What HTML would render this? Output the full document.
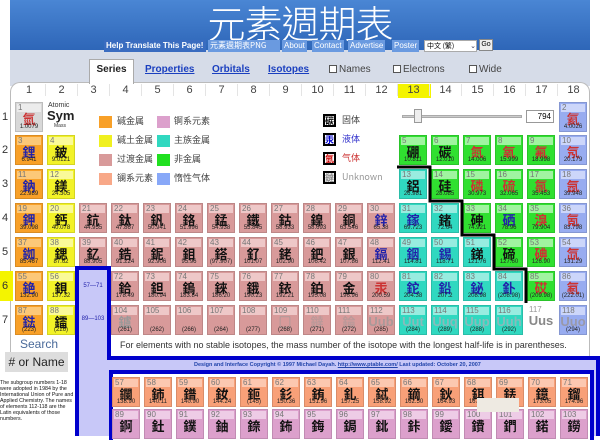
<!DOCTYPE html>
<html><head><meta charset="utf-8">
<style>
*{margin:0;padding:0;box-sizing:border-box}
body{width:600px;height:431px;overflow:hidden;background:#fff;position:relative;font-family:"Liberation Sans","Noto Sans CJK TC",sans-serif}
.a{position:absolute}
.c{position:absolute;width:28px;height:30px;border:1px solid rgba(0,0,0,.12);overflow:hidden}
.c .t{position:absolute;left:1px;top:1px;right:1px;height:8px;font-size:8px;line-height:8px;color:#777;padding-left:1px}
.c .s{position:absolute;left:0;right:0;top:9px;text-align:center;font-size:13px;line-height:14px;font-weight:bold;font-family:"Noto Sans CJK TC","WenQuanYi Zen Hei",sans-serif}
.c .m{position:absolute;left:0;right:0;bottom:1px;text-align:center;font-size:6px;line-height:6px;color:#222}
.g{position:absolute;top:84px;width:32px;text-align:center;font-size:11px;color:#444}
.nav{position:absolute;top:40px;height:12px;font-size:8px;line-height:12px;color:#fff;padding:0 2px}
.lg{position:absolute;width:13px;height:12px}
.lt{position:absolute;font-size:9px;color:#444;font-family:"Noto Sans CJK TC",sans-serif}
.sb{position:absolute;width:13px;height:13px;border:2px solid #000;font-size:9px;line-height:9px;text-align:center;font-weight:bold;background:#fff;font-family:"Noto Sans CJK TC",sans-serif}
.tab{position:absolute;top:64px;font-size:10px;font-weight:bold;color:#1a3fbf;text-decoration:underline}
.cb{position:absolute;top:64px;font-size:10px;color:#444}
.cb i{display:inline-block;width:8px;height:8px;border:1px solid #555;margin-right:2px;vertical-align:-1px;background:#fff}
</style></head><body>
<div class="a" style="left:10px;top:0;width:580px;height:50px;background:linear-gradient(#4a86d4,#2e66b8)"></div>
<div class="a" style="left:10px;top:50px;width:580px;height:36px;background:#d6dce8"></div>
<div class="a" style="left:200px;top:-6px;width:200px;text-align:center;font-size:38px;color:#fff;font-family:'Noto Sans CJK TC',sans-serif;font-weight:300;letter-spacing:-1px">元素週期表</div>
<div class="nav" style="left:104px;width:102px;background:#3a6cc0;font-weight:bold">Help Translate This Page!</div>
<div class="nav" style="left:208px;width:72px;background:#6a9ae0;font-family:'Noto Sans CJK TC',sans-serif">元素週期表PNG</div>
<div class="nav" style="left:282px;background:#6a9ae0">About</div>
<div class="nav" style="left:312px;background:#6a9ae0">Contact</div>
<div class="nav" style="left:348px;background:#6a9ae0">Advertise</div>
<div class="nav" style="left:392px;background:#6a9ae0">Poster</div>
<div class="a" style="left:424px;top:40px;width:53px;height:12px;background:#fff;border:1px solid #aaa;font-size:7px;line-height:10px;padding-left:2px;font-family:'Noto Sans CJK TC',sans-serif">中文 (繁) <span style="float:right;color:#335">⌄</span></div>
<div class="a" style="left:479px;top:39px;width:14px;height:12px;background:#eee;border:1px solid #888;font-size:7px;line-height:10px;text-align:center">Go</div>
<div class="a" style="left:10px;top:82px;width:580px;height:280px;background:#fff;border:1px solid #bbb;border-bottom:none;border-radius:10px 10px 0 0"></div>
<div class="a" style="left:89px;top:59px;width:45px;height:25px;background:#fff;border:1px solid #aaa;border-bottom:none;font-size:10px;font-weight:bold;text-align:center;line-height:20px;color:#222">Series</div>
<div class="tab" style="left:145px">Properties</div>
<div class="tab" style="left:212px">Orbitals</div>
<div class="tab" style="left:268px">Isotopes</div>
<div class="cb" style="left:329px"><i></i>Names</div>
<div class="cb" style="left:393px"><i></i>Electrons</div>
<div class="cb" style="left:469px"><i></i>Wide</div>
<div class="a" style="left:398px;top:84px;width:33px;height:14px;background:#f4f400"></div>
<div id="grp"></div>
<div class="lg" style="left:99px;top:116px;background:#f8a028"></div><div class="lt" style="left:117px;top:114px">碱金属</div>
<div class="lg" style="left:99px;top:135px;background:#f0f020"></div><div class="lt" style="left:117px;top:133px">碱土金属</div>
<div class="lg" style="left:99px;top:154px;background:#d89a9a"></div><div class="lt" style="left:117px;top:152px">过渡金属</div>
<div class="lg" style="left:99px;top:173px;background:#f8a888"></div><div class="lt" style="left:117px;top:171px">镧系元素</div>
<div class="lg" style="left:157px;top:116px;background:#dca0cc"></div><div class="lt" style="left:174px;top:114px">锕系元素</div>
<div class="lg" style="left:157px;top:135px;background:#30d8c0"></div><div class="lt" style="left:174px;top:133px">主族金属</div>
<div class="lg" style="left:157px;top:154px;background:#20e020"></div><div class="lt" style="left:174px;top:152px">非金属</div>
<div class="lg" style="left:157px;top:173px;background:#88a8f8"></div><div class="lt" style="left:174px;top:171px">惰性气体</div>
<div class="sb" style="left:323px;top:114px">碳</div><div class="lt" style="left:342px;top:113px">固体</div>
<div class="sb" style="left:323px;top:133px;color:#00c">汞</div><div class="lt" style="left:342px;top:132px;color:#33c">液体</div>
<div class="sb" style="left:323px;top:152px;color:#c00">氫</div><div class="lt" style="left:342px;top:151px;color:#c33">气体</div>
<div class="sb" style="left:323px;top:171px;color:#888">鐽</div><div class="lt" style="left:342px;top:170px;color:#999">Unknown</div>
<div class="a" style="left:402px;top:115px;width:120px;height:3px;background:#ccc;border:1px solid #aaa"></div>
<div class="a" style="left:414px;top:109px;width:8px;height:14px;background:#eee;border:1px solid #999"></div>
<div class="a" style="left:526px;top:110px;width:28px;height:13px;border:1px solid #999;font-size:8px;text-align:right;padding-right:2px;line-height:11px">794</div>
<div class="a" style="left:48px;top:102px;font-size:7px;color:#333">Atomic</div>
<div class="a" style="left:47px;top:108px;font-size:13px;font-weight:bold;color:#222">Sym</div>
<div class="a" style="left:54px;top:123px;font-size:5px;color:#333">Mass</div>
<div id="cells"></div>
<svg class="a" style="left:0;top:0" width="600" height="431"><polyline points="397,167 430,167 430,201 462,201 462,235 494,235 494,269 526,269 526,303" fill="none" stroke="#000" stroke-width="3"/></svg>
<div class="a" style="left:0;top:271px;width:13px;height:30px;background:#f4f400"></div>
<div id="per"></div>
<div class="a" style="left:120px;top:340px;font-size:9px;color:#333">For elements with no stable isotopes, the mass number of the isotope with the longest half-life is in parentheses.</div>
<div class="a" style="left:20px;top:337px;font-size:12px;color:#4a6a9a">Search</div>
<div class="a" style="left:5px;top:352px;width:63px;height:20px;background:#ddd;font-size:12px;line-height:20px;text-align:center;color:#222">#&nbsp;or Name</div>
<div class="a" style="left:0;top:380px;width:74px;font-size:5.3px;line-height:6px;color:#111">The subgroup numbers 1-18 were adopted in 1984 by the International Union of Pure and Applied Chemistry. The names of elements 112-118 are the Latin equivalents of those numbers.</div>
<div class="a" style="left:75px;top:266px;width:36px;height:170px;background:#c8c8f8;border:4px solid #0000cc;border-bottom:none"></div>
<div class="a" style="left:107px;top:356px;width:493px;height:80px;background:#c8c8f8;border-top:4px solid #0000cc;border-right:4px solid #0000cc"></div>
<div class="a" style="left:79px;top:283px;width:28px;text-align:center;font-size:6px;color:#22a">57—71</div>
<div class="a" style="left:79px;top:316px;width:28px;text-align:center;font-size:6px;color:#22a">89—103</div>
<div class="a" style="left:194px;top:362px;font-size:5.5px;font-weight:bold;color:#2244aa;white-space:nowrap">Design and Interface Copyright © 1997 Michael Dayah. <u>http://www.ptable.com/</u> Last updated: October 20, 2007</div>
<div class="a" style="left:109px;top:370px;width:485px;height:70px;background:#fff;border:4px solid #0000cc;border-bottom:none"></div>
<div id="lan"></div>
<div class="a" style="left:477px;top:398px;width:42px;height:14px;background:#eeeae2"></div>
<script>
var C={a:['#f8a028','#fcc878'],e:['#f2f228','#fafa98'],t:['#d89a9a','#eec8c8'],l:['#f8a078','#fcc8b0'],c:['#dca0cc','#eecce6'],p:['#30d8c0','#98ece0'],n:['#30e030','#a0f4a0'],g:['#98acf0','#ccd6fa'],h:['#d8d8d8','#ececec'],w:['#fff','#fff']};
var X=function(c){return 15+32*(c-1)};
var Y=[0,102,135,169,203,237,271,305];
var E=[
[1,1,1,'氫','1.0079','h','#c33'],[2,18,1,'氦','4.0026','g','#c33'],
[3,1,2,'鋰','6.941','a','#22a'],[4,2,2,'鈹','9.0121','e'],[5,13,2,'硼','10.811','n'],[6,14,2,'碳','12.010','n'],[7,15,2,'氮','14.006','n','#c33'],[8,16,2,'氧','15.999','n','#c33'],[9,17,2,'氟','18.998','n','#c33'],[10,18,2,'氖','20.179','g','#c33'],
[11,1,3,'鈉','22.989','a','#22a'],[12,2,3,'鎂','24.305','e'],[13,13,3,'鋁','26.981','p'],[14,14,3,'硅','28.085','n'],[15,15,3,'磷','30.973','n','#c33'],[16,16,3,'硫','32.065','n','#c33'],[17,17,3,'氯','35.453','n','#c33'],[18,18,3,'氬','39.948','g','#c33'],
[19,1,4,'鉀','39.098','a','#22a'],[20,2,4,'鈣','40.078','e'],[21,3,4,'鈧','44.955','t'],[22,4,4,'鈦','47.867','t'],[23,5,4,'釩','50.941','t'],[24,6,4,'鉻','51.996','t'],[25,7,4,'錳','54.938','t'],[26,8,4,'鐵','55.845','t'],[27,9,4,'鈷','58.933','t'],[28,10,4,'鎳','58.693','t'],[29,11,4,'銅','63.546','t'],[30,12,4,'鋅','65.38','t','#22a'],[31,13,4,'鎵','69.723','p','#22a'],[32,14,4,'鍺','72.64','p'],[33,15,4,'砷','74.921','n'],[34,16,4,'硒','78.96','n','#22a'],[35,17,4,'溴','79.904','n','#c33'],[36,18,4,'氪','83.798','g','#c33'],
[37,1,5,'銣','85.467','a','#22a'],[38,2,5,'鍶','87.62','e'],[39,3,5,'釔','88.905','t'],[40,4,5,'鋯','91.224','t'],[41,5,5,'鈮','92.906','t'],[42,6,5,'鉬','95.96','t'],[43,7,5,'鎝','(97.907)','t'],[44,8,5,'釕','101.07','t'],[45,9,5,'銠','102.90','t'],[46,10,5,'鈀','106.42','t'],[47,11,5,'銀','107.86','t'],[48,12,5,'鎘','112.41','t','#22a'],[49,13,5,'銦','114.81','p','#22a'],[50,14,5,'錫','118.71','p','#22a'],[51,15,5,'銻','121.76','p'],[52,16,5,'碲','127.60','n'],[53,17,5,'碘','126.90','n','#c33'],[54,18,5,'氙','131.29','g','#c33'],
[55,1,6,'銫','132.90','a','#22a'],[56,2,6,'鋇','137.32','e'],[72,4,6,'鉿','178.49','t'],[73,5,6,'鉭','180.94','t'],[74,6,6,'鎢','183.84','t'],[75,7,6,'錸','186.20','t'],[76,8,6,'鋨','190.23','t'],[77,9,6,'銥','192.21','t'],[78,10,6,'鉑','195.08','t'],[79,11,6,'金','196.96','t'],[80,12,6,'汞','200.59','t','#c33'],[81,13,6,'鉈','204.38','p','#22a'],[82,14,6,'鉛','207.2','p','#22a'],[83,15,6,'鉍','208.98','p','#22a'],[84,16,6,'釙','(208.98)','p','#22a'],[85,17,6,'砹','(209.98)','n','#c33'],[86,18,6,'氡','(222.01)','g','#c33'],
[87,1,7,'鍅','(223)','a','#22a'],[88,2,7,'鐳','(226)','e'],[104,4,7,'鑪','(261)','t','#999'],[105,5,7,'','(262)','t'],[106,6,7,'','(266)','t'],[107,7,7,'','(264)','t'],[108,8,7,'','(277)','t'],[109,9,7,'□','(268)','t','#999'],[110,10,7,'鐽','(271)','t','#b99'],[111,11,7,'錀','(272)','t','#b99'],[112,12,7,'Uub','(285)','t','#a99'],[113,13,7,'Uut','(284)','p','#8bb'],[114,14,7,'Uuq','(289)','p','#8bb'],[115,15,7,'Uup','(288)','p','#8bb'],[116,16,7,'Uuh','(292)','p','#8bb'],[117,17,7,'Uus','','w','#888'],[118,18,7,'Uuo','(294)','g','#99a']];
var L=[['鑭','138.90'],['鈰','140.11'],['鐠','140.90'],['釹','144.24'],['鉕','(145)'],['釤','150.36'],['銪','151.96'],['釓','157.25'],['鋱','158.92'],['鏑','162.50'],['鈥','164.93'],['鉺','167.26'],['銩','168.93'],['鐿','173.05'],['鎦','174.96']];
var A=['錒','釷','鏷','鈾','錼','鈽','鋂','鋦','鉳','鉲','鑀','鐨','鍆','鍩','鐒'];
function cell(n,x,y,s,m,k,col){var c=C[k];var st=k=='w'?'border:none;':'';var fs=/^[A-Z]/.test(s)?'font-family:Liberation Sans,sans-serif;font-size:13px;':'';
return '<div class="c" style="left:'+x+'px;top:'+y+'px;background:'+c[0]+';'+st+'"><div class="t" style="background:'+c[1]+(k=='w'?';color:#999':'')+'">'+n+'</div><div class="s" style="color:'+(col||'#111')+';'+fs+'">'+s+'</div><div class="m">'+m+'</div></div>';}
var h='';E.forEach(function(e){h+=cell(e[0],X(e[1]),Y[e[2]],e[3],e[4],e[5],e[6]);});
document.getElementById('cells').innerHTML=h;
h='';L.forEach(function(e,i){h+=cell(57+i,112+32*i,377,e[0],e[1],'l');});
A.forEach(function(e,i){h+=cell(89+i,112+32*i,409,e,'','c');});
document.getElementById('lan').innerHTML=h;
h='';for(var i=1;i<=18;i++)h+='<div class="g" style="left:'+(13+32*(i-1))+'px;'+(i>1?'border-left:1px solid #e4e4e4;':'')+'">'+i+'</div>';
document.getElementById('grp').innerHTML=h;
h='';for(var i=1;i<=7;i++)h+='<div class="a" style="left:2px;top:'+(Y[i]+9)+'px;font-size:11px;color:#333">'+i+'</div>';
document.getElementById('per').innerHTML=h;
</script>
</body></html>
